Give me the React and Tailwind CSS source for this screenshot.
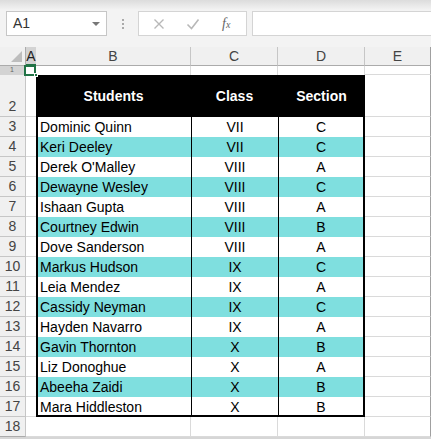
import React from 'react';

const students = [
  ['Dominic Quinn', 'VII', 'C'],
  ['Keri Deeley', 'VII', 'C'],
  ["Derek O'Malley", 'VIII', 'A'],
  ['Dewayne Wesley', 'VIII', 'C'],
  ['Ishaan Gupta', 'VIII', 'A'],
  ['Courtney Edwin', 'VIII', 'B'],
  ['Dove Sanderson', 'VIII', 'A'],
  ['Markus Hudson', 'IX', 'C'],
  ['Leia Mendez', 'IX', 'A'],
  ['Cassidy Neyman', 'IX', 'C'],
  ['Hayden Navarro', 'IX', 'A'],
  ['Gavin Thornton', 'X', 'B'],
  ['Liz Donoghue', 'X', 'A'],
  ['Abeeha Zaidi', 'X', 'B'],
  ['Mara Hiddleston', 'X', 'B'],
];

const font = { fontFamily: '"Liberation Sans", Arial, sans-serif' };

// plain grid cell
const Cell = ({ w, children, className = '' }) => (
  <div className={`${w} h-full shrink-0 border-r border-b border-[#dadada] bg-white ${className}`}>
    {children}
  </div>
);

const RowHead = ({ children, className = '' }) => (
  <div className={`w-[26px] h-full shrink-0 flex items-end justify-center border-r border-b border-[#c6c6c6] bg-[#f0f0f0] text-[14px] leading-[20px] text-[#444] ${className}`}>
    {children}
  </div>
);

export default function App() {
  return (
    <div className="w-[431px] h-[439px] overflow-hidden bg-white relative" style={font}>
      {/* toolbar */}
      <div className="h-[47px] flex items-start pt-[11px] pl-[6px] bg-[linear-gradient(#dcdcdc,#f3f3f3_10px)]">
        <div className="w-[101px] h-[25px] bg-white border border-[#c6c6c6] flex items-center justify-between pl-[6px] pr-[6px]">
          <span className="text-[14px] text-[#333]">A1</span>
          <span className="w-0 h-0 border-l-[4px] border-r-[4px] border-t-[4px] border-l-transparent border-r-transparent border-t-[#777]" />
        </div>
        <div className="w-[31px] h-[25px] flex flex-col items-center justify-center gap-[2px]">
          <span className="w-[2px] h-[2px] bg-[#aaa]" />
          <span className="w-[2px] h-[2px] bg-[#aaa]" />
          <span className="w-[2px] h-[2px] bg-[#aaa]" />
        </div>
        <div className="w-[109px] h-[25px] bg-white border border-[#d4d4d4] flex items-center">
          <svg width="12" height="12" viewBox="0 0 12 12" className="ml-[14px]">
            <path d="M1.5 1.5l9 9M10.5 1.5l-9 9" stroke="#b8b8b8" strokeWidth="1.4" />
          </svg>
          <svg width="14" height="12" viewBox="0 0 14 12" className="ml-[21px]">
            <path d="M1.5 6.5l4 4 7-9" stroke="#b8b8b8" strokeWidth="1.6" fill="none" />
          </svg>
          <span className="ml-[22px] text-[14px] italic text-[#666]" style={{ fontFamily: '"Liberation Serif", serif' }}>
            f<span className="text-[10px]">x</span>
          </span>
        </div>
        <div className="ml-[5px] flex-1 h-[25px] bg-white border border-[#d4d4d4] border-r-0" />
      </div>

      {/* column headers */}
      <div className="flex h-[19px] text-[14px] text-[#444] leading-[18px]">
        <div className="w-[26px] shrink-0 relative bg-[#f0f0f0] border-r border-b border-[#ababab]">
          <span className="absolute right-[3px] bottom-[3px] w-0 h-0 border-l-[11px] border-b-[11px] border-l-transparent border-b-[#bdbdbd]" />
        </div>
        <div className="w-[10px] shrink-0 bg-[#d3d3d3] border-b-2 border-[#217346] text-center text-[#222] overflow-hidden">A</div>
        <div className="w-[155px] shrink-0 bg-[#f0f0f0] border-r border-b border-r-[#c6c6c6] border-b-[#ababab] text-center">B</div>
        <div className="w-[87px] shrink-0 bg-[#f0f0f0] border-r border-b border-r-[#c6c6c6] border-b-[#ababab] text-center">C</div>
        <div className="w-[87px] shrink-0 bg-[#f0f0f0] border-r border-b border-r-[#c6c6c6] border-b-[#ababab] text-center">D</div>
        <div className="w-[66px] shrink-0 bg-[#f0f0f0] border-r border-b border-r-[#a0a0a0] border-b-[#ababab] text-center">E</div>
      </div>

      {/* row 1 */}
      <div className="flex h-[9px]">
        <div className="w-[26px] h-full shrink-0 bg-[#d3d3d3] border-r-2 border-[#217346] text-[7px] leading-[8px] text-[#666] text-center">1</div>
        <div className="w-[10px] h-full shrink-0 relative">
          <div className="absolute -left-[2px] -top-[1px] w-[12px] h-[11px] border-2 border-[#217346]" />
          <div className="absolute left-[8px] top-[7px] w-[4px] h-[4px] bg-[#217346] border border-white z-10" />
        </div>
        <Cell w="w-[155px]" className="border-b-0" />
        <Cell w="w-[87px]" className="border-b-0" />
        <Cell w="w-[87px]" className="border-b-0" />
        <Cell w="w-[66px]" className="border-r-[#a0a0a0]" />
      </div>

      {/* row 2 header */}
      <div className="flex h-[42px] text-[14px]">
        <RowHead>2</RowHead>
        <Cell w="w-[10px]" className="border-r-0" />
        <div className="w-[329px] shrink-0 h-full bg-black flex items-center text-white font-bold">
          <div className="w-[155px] text-center">Students</div>
          <div className="w-[87px] text-center">Class</div>
          <div className="w-[87px] text-center">Section</div>
        </div>
        <Cell w="w-[66px]" className="border-r-[#a0a0a0]" />
      </div>

      {/* data rows */}
      {students.map(([name, cls, sec], i) => {
        const bg = i % 2 === 1 ? 'bg-[#7fdfdf]' : 'bg-white';
        const last = i === students.length - 1 ? 'border-b-2 border-b-black' : '';
        return (
          <div key={name} className="flex h-[20px] text-[14px] leading-[20px] text-black">
            <RowHead>{i + 3}</RowHead>
            <Cell w="w-[10px]" className="border-r-0" />
            <div className={`w-[155px] shrink-0 h-full border-l-2 border-black pl-[2px] whitespace-nowrap ${bg} ${last}`}>{name}</div>
            <div className={`w-[87px] shrink-0 h-full border-l border-black text-center ${bg} ${last}`}>{cls}</div>
            <div className={`w-[87px] shrink-0 h-full border-l border-r-2 border-black text-center ${bg} ${last}`}>{sec}</div>
            <Cell w="w-[66px]" className="border-r-[#a0a0a0]" />
          </div>
        );
      })}

      {/* row 18 */}
      <div className="flex h-[20px] text-[14px]">
        <RowHead className="border-b-[#ababab]">18</RowHead>
        <Cell w="w-[10px]" className="border-r-0" />
        <Cell w="w-[155px]" />
        <Cell w="w-[87px]" />
        <Cell w="w-[87px]" />
        <Cell w="w-[66px]" className="border-r-[#a0a0a0]" />
      </div>
      <div className="h-[2px] bg-[#d6d6d6]" />
    </div>
  );
}
